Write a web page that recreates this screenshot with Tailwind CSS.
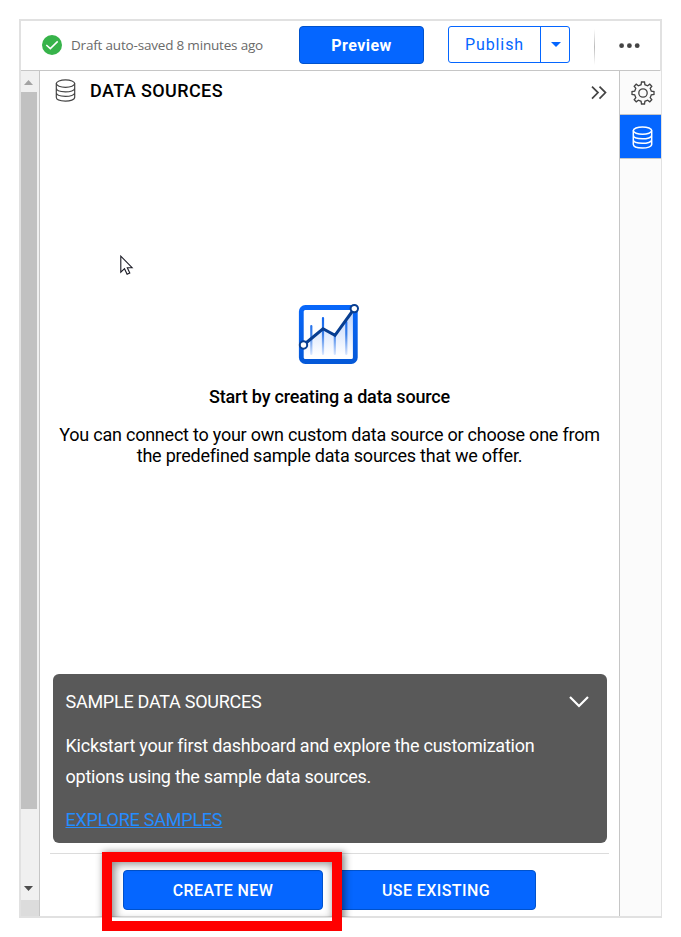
<!DOCTYPE html>
<html lang="en">
<head>
<meta charset="utf-8">
<title>Data Sources</title>
<script src="https://cdn.jsdelivr.net/npm/@tailwindcss/browser@4"></script>
</head>
<body class="bg-white font-['Roboto',sans-serif] text-black w-[681px] h-[937px] overflow-hidden">
<div class="relative w-[681px] h-[937px] pl-[19px] pt-[19px]">
  <div class="w-[643px] h-[899px] border-2 border-[#e1e1e1] flex flex-col">
    <header class="h-[50px] shrink-0 border-b border-[#c6c6c6] flex items-start whitespace-nowrap">
      <svg class="ml-[21px] mt-[14px] size-5 shrink-0" viewBox="0 0 20 20"><circle cx="10" cy="10" r="10" fill="#37b34a"/><path d="M4.300 10l4 3.600 7.400-7.200" fill="none" stroke="#fff" stroke-width="1.500"/></svg>
      <div class="ml-[9px] mt-[14px] w-[193px] font-['Open_Sans',sans-serif] text-[13.5px] leading-5 tracking-[-0.19px] text-[#6a6a6a]">Draft auto-saved 8 minutes ago</div>
      <button class="ml-[35px] mt-[5px] w-[125px] h-[38px] rounded-[4px] border border-[#0052cc] bg-[#0566ff] text-white text-base font-bold tracking-[0.45px] pt-px">Preview</button>
      <div class="ml-6 mt-[5px] w-[122px] h-[37px] rounded-[3px] border border-[#0566ff] flex text-[#0566ff]">
        <button class="w-[92px] border-r border-[#0566ff] text-base tracking-[0.9px]">Publish</button>
        <button class="flex-1 flex justify-center items-center pl-[2px] pb-px"><svg class="w-[10px] h-[5px]" viewBox="0 0 10 5"><path d="M0 0h10L5 5z" fill="#0566ff"/></svg></button>
      </div>
      <div class="ml-6 mt-2 w-px h-[36px] bg-gradient-to-b from-white via-[#bbb] to-white"></div>
      <svg class="ml-6 mt-[21px] w-[22px] h-[7px]" viewBox="0 0 22 7"><g fill="#444"><circle cx="2.600" cy="3.700" r="2.400"/><circle cx="10.400" cy="3.700" r="2.400"/><circle cx="18.200" cy="3.700" r="2.400"/></g></svg>
    </header>
    <div class="flex-1 min-h-0 flex">
      <div class="w-[19px] shrink-0 border-r border-[#c6c6c6] bg-[#f0f0f0] flex flex-col">
        <div class="h-[21px] flex justify-center items-center pr-[4px] pt-[2px]"><svg class="w-[9px] h-[5px]" viewBox="0 0 9 5"><path d="M0 5h9L4.500 0z" fill="#a3a3a3"/></svg></div>
        <div class="h-[717px] w-4 bg-[#c1c1c1]"></div>
        <div class="h-[91px] flex justify-center items-end pb-[9px] pr-[4px]"><svg class="w-[9px] h-[5px]" viewBox="0 0 9 5"><path d="M0 0h9L4.500 5z" fill="#4d4d4d"/></svg></div>
        <div class="flex-1 bg-[#dcdcdc]"></div>
      </div>
      <main class="w-[579px] shrink-0 flex flex-col">
        <div class="h-[44px] shrink-0 flex items-start">
          <svg class="ml-[15px] mt-[8px] w-[21px] h-[23px]" viewBox="0 0 21 23" fill="none" stroke="#444" stroke-width="1.200"><ellipse cx="10.500" cy="4.600" rx="9.200" ry="3.700"/><path d="M1.300 4.600v13.700c0 5 18.400 5 18.400 0V4.600M1.300 9.300c0 4.700 18.400 4.700 18.400 0M1.300 13.800c0 4.700 18.400 4.700 18.400 0"/></svg>
          <h1 class="ml-[14px] mt-[8px] text-[18px] leading-6 font-medium tracking-[0.4px] whitespace-nowrap">DATA SOURCES</h1>
          <svg class="ml-auto mr-3 mt-[15px] w-[16px] h-[14px]" viewBox="0 0 16 14" fill="none" stroke="#444" stroke-width="1.700"><path d="M1 .6l6 6-6 6M8.500 .6l6 6-6 6"/></svg>
        </div>
        <div class="h-[559px] shrink-0 flex flex-col items-center text-center whitespace-nowrap">
          <svg class="mt-[188px] mr-[2px] w-[62px] h-[62px] shrink-0" viewBox="0 0 62 62" fill="none">
            <defs>
              <linearGradient id="area" x1="0" y1="5" x2="0" y2="52" gradientUnits="userSpaceOnUse"><stop stop-color="#b9d0fb"/><stop offset="1" stop-color="#fff"/></linearGradient>
              <linearGradient id="bar" x1="0" y1="10" x2="0" y2="52" gradientUnits="userSpaceOnUse"><stop stop-color="#0661f3"/><stop offset=".5" stop-color="#397ee8"/><stop offset="1" stop-color="#dce8ff"/></linearGradient>
              <linearGradient id="frame" x1="0" y1="3" x2="0" y2="61" gradientUnits="userSpaceOnUse"><stop stop-color="#0867fa"/><stop offset="1" stop-color="#0558d7"/></linearGradient>
            </defs>
            <path d="M6 42l19-16 12 7L55 7v49H6z" fill="url(#area)"/>
            <path d="M13.300 23v28M25 15v36M36.800 31v20M48.300 19v32" stroke="url(#bar)" stroke-width="2.200" stroke-linecap="round"/>
            <rect x="3.300" y="4.500" width="54" height="54" rx="4" stroke="url(#frame)" stroke-width="4.800"/>
            <path d="M5.500 42L25 25.800l12 6.600L56 6" stroke="#083e91" stroke-width="3"/>
            <circle cx="5.500" cy="42" r="3.700" fill="#fff" stroke="#083e91" stroke-width="2"/>
            <circle cx="56.300" cy="5.600" r="3.700" fill="#fff" stroke="#083e91" stroke-width="2"/>
          </svg>
          <h2 class="mt-5 text-[18px] leading-6 font-medium tracking-[-0.17px]">Start by creating a data source</h2>
          <p class="mt-[15px] text-[18px] leading-[21px] tracking-[-0.23px]">You can connect to your own custom data source or choose one from<br>the predefined sample data sources that we offer.</p>
        </div>
        <section class="ml-[13px] mr-3 h-[169px] shrink-0 rounded-[6px] bg-[#595959] text-white text-[18px] px-3 pt-[15px] flex flex-col whitespace-nowrap tracking-[-0.23px]">
          <div class="flex items-center justify-between h-6"><span class="tracking-[-0.26px] ml-[0.5px]">SAMPLE DATA SOURCES</span><svg class="mr-[6px] mt-px w-5 h-3" viewBox="0 0 20 12" fill="none" stroke="#fff" stroke-width="2.200"><path d="M1 1l9 9 9-9"/></svg></div>
          <p class="mt-[17px] ml-[0.5px] leading-[31px]">Kickstart your first dashboard and explore the customization<br>options using the sample data sources.</p>
          <a class="mt-4 ml-[0.5px] w-fit leading-6 text-[#248cff] underline decoration-1">EXPLORE SAMPLES</a>
        </section>
        <div class="ml-[10px] mr-[10px] mt-[10px] pt-4 border-t border-[#dcdcdc] flex justify-center gap-[13px] text-white text-base font-medium tracking-[0.42px]">
          <button class="w-[200px] h-10 rounded-[4px] border border-[#0052cc] bg-[#0566ff] pt-[2px]">CREATE NEW</button>
          <button class="w-[200px] h-10 rounded-[4px] border border-[#0052cc] bg-[#0566ff] pt-[2px]">USE EXISTING</button>
        </div>
      </main>
      <aside class="flex-1 -mr-px border-l border-[#c6c6c6] bg-[#fbfbfb]">
        <div class="h-[44px] border-b border-[#c6c6c6] flex justify-center items-center pl-[4px]">
          <svg class="size-6" viewBox="0 0 24 24" fill="none" stroke="#444" stroke-width="1.300"><circle cx="12" cy="12" r="4.200"/><path d="M10.500 1h3l.4 2.700 2.700 1.100L18.800 3.200 20.800 5.200 19.200 7.400l1.100 2.700 2.700.4v3l-2.700.4-1.100 2.700 1.600 2.200-2 2-2.200-1.600-2.700 1.100-.4 2.700h-3l-.4-2.700-2.700-1.100-2.200 1.600-2-2 1.600-2.200-1.100-2.700L1 13.500v-3l2.700-.4 1.100-2.700L3.200 5.200l2-2 2.200 1.600 2.700-1.100z"/></svg>
        </div>
        <div class="h-[44px] border-b border-[#c6c6c6] bg-[#0566ff] flex justify-center items-center pl-[4px] pt-px">
          <svg class="w-[21px] h-[23px]" viewBox="0 0 21 23" fill="none" stroke="#fff" stroke-width="1.500"><ellipse cx="10.500" cy="4.600" rx="9.200" ry="3.700"/><path d="M1.300 4.600v13.700c0 5 18.400 5 18.400 0V4.600M1.300 9.300c0 4.700 18.400 4.700 18.400 0M1.300 13.800c0 4.700 18.400 4.700 18.400 0"/></svg>
        </div>
      </aside>
    </div>
  </div>
  <svg class="absolute left-[120px] top-[255px] w-[14px] h-[21px]" viewBox="0 0 14 21"><path d="M.8 1.200v16l3.700-3.500 2.600 5.500 2.700-1.200-2.500-5.300h4.800z" fill="#fff" stroke="#1a1a24" stroke-width="1.100"/></svg>
  <div class="absolute left-[90px] top-[840px] w-[264px] h-[77px] overflow-hidden">
    <div class="absolute left-[12px] top-[12px] w-[240px] h-[79px] border-[10px] border-[#f00] shadow-[2px_1px_7px_1px_rgba(0,0,0,0.45),inset_2px_1px_9px_1px_rgba(0,0,0,0.45)]"></div>
  </div>
  <div class="absolute left-[102px] top-[852px] w-[240px] h-[79px] border-[10px] border-[#f00]"></div>
</div>
</body>
</html>
